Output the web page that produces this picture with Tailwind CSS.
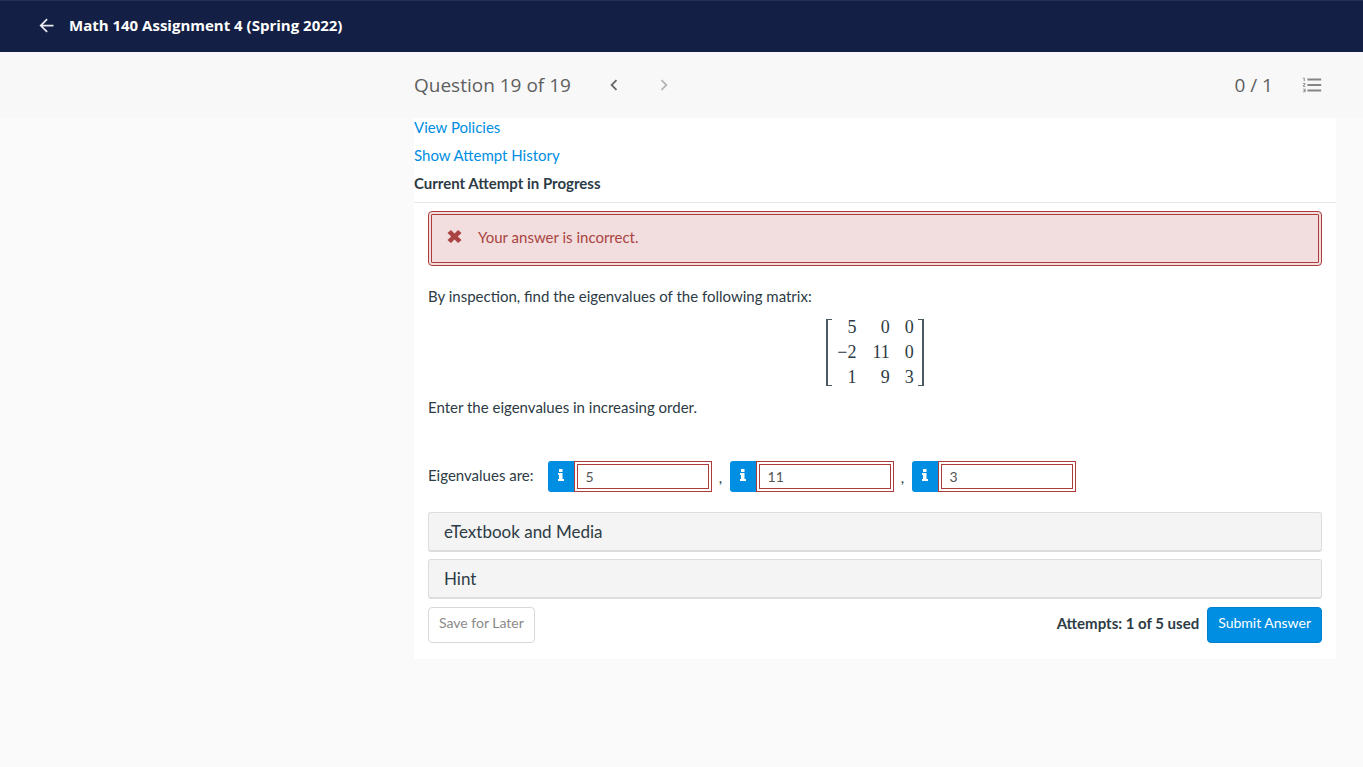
<!DOCTYPE html>
<html lang="en">
<head>
  <meta charset="UTF-8" />
  <meta name="viewport" content="width=device-width, initial-scale=1.0" />
  <title>Math 140 Assignment 4 (Spring 2022)</title>
  <script src="https://cdn.jsdelivr.net/npm/@tailwindcss/browser@4"></script>
</head>
<body class="min-h-screen bg-[#fafafa] font-['Lato',sans-serif] text-[15px] leading-5 text-[#2d3b45]">

  <!-- Top bar -->
  <header class="flex h-[52px] items-center gap-3 border-t border-[#233056] bg-[#131f44] pb-[3px] pl-9 font-['Open_Sans',sans-serif] text-white">
    <a href="#" aria-label="Back">
      <svg class="size-[21px]" viewBox="0 0 24 24" fill="#e8eaf0"><path d="M20 11H7.83l5.59-5.59L12 4l-8 8 8 8 1.41-1.41L7.83 13H20v-2z" /></svg>
    </a>
    <h1 class="text-[15px] font-bold">Math 140 Assignment 4 (Spring 2022)</h1>
  </header>

  <!-- Question navigation -->
  <nav class="flex h-[66px] items-center bg-[#f8f8f8] pr-10 pl-[414px] font-['Open_Sans',sans-serif] text-[19px] text-[#5f5f5f]">
    <h2>Question 19 of 19</h2>
    <button type="button" aria-label="Previous question" class="ml-8">
      <svg class="size-[22px]" viewBox="0 0 24 24" fill="#666"><path d="M15.41 7.41L14 6l-6 6 6 6 1.41-1.41L10.83 12z" /></svg>
    </button>
    <button type="button" aria-label="Next question" disabled class="ml-7">
      <svg class="size-[22px]" viewBox="0 0 24 24" fill="#b5b5b5"><path d="M10 6L8.59 7.41 13.17 12l-4.58 4.59L10 18l6-6z" /></svg>
    </button>
    <span class="ml-auto">0 / 1</span>
    <button type="button" aria-label="Question list" class="ml-7">
      <svg class="size-[22px]" viewBox="0 0 24 24" fill="#858585"><path d="M2 17h2v.5H3v1h1v.5H2v1h3v-4H2v1zm1-9h1V4H2v1h1v3zm-1 3h1.800L2 13.100v.9h3v-1H3.200L5 10.900V10H2v1zm5-6v2h15V5H7zm0 14h15v-2H7v2zm0-6h15v-2H7v2z" /></svg>
    </button>
  </nav>

  <!-- Question card -->
  <main class="mr-[27px] ml-[414px] bg-white pb-4">
    <div class="flex flex-col items-start gap-2 border-b border-[#e8e8e8] pb-[9px]">
      <a href="#" class="-mt-px text-[#008ee2]">View Policies</a>
      <a href="#" class="text-[#008ee2]">Show Attempt History</a>
      <h3 class="font-bold">Current Attempt in Progress</h3>
    </div>

    <div class="px-[14px] pt-2">
      <div role="alert" class="flex h-[55px] items-center gap-4 rounded-[4px] border-4 border-double border-[#ac3c3c] bg-[#f2dede] px-[15px] pb-1 text-[#a94442]">
        <svg class="size-[15px]" viewBox="0 0 16 16" fill="#a94442"><path d="M4.200 1L8 4.800 11.800 1 15.500 4.300 11.500 8l4 3.700L11.800 15 8 11.200 4.200 15 .5 11.700 4.500 8 .5 4.300z" /></svg>
        <p>Your answer is incorrect.</p>
      </div>

      <p class="mt-5">By inspection, find the eigenvalues of the following matrix:</p>

      <!-- Matrix -->
      <div class="mt-[13px] flex justify-center">
        <span class="w-[6px] border-y border-l-2 border-[#4a5860]"></span>
        <table class="-my-1 mr-1 ml-[5px] text-right font-['Liberation_Serif',serif] text-lg leading-[25px]">
          <tbody>
            <tr><td>5</td><td class="pl-4">0</td><td class="pl-[15px]">0</td></tr>
            <tr><td>−2</td><td class="pl-4">11</td><td class="pl-[15px]">0</td></tr>
            <tr><td>1</td><td class="pl-4">9</td><td class="pl-[15px]">3</td></tr>
          </tbody>
        </table>
        <span class="w-[6px] border-y border-r-2 border-[#4a5860]"></span>
      </div>

      <p class="mt-[11px]">Enter the eigenvalues in increasing order.</p>

      <form>
        <div class="mt-11 flex items-center">
          <span class="mr-[14px] pb-1">Eigenvalues are:</span>
          <div class="flex h-[31px]">
            <button type="button" aria-label="Information" class="flex w-[26px] items-center justify-center rounded-l-[3px] bg-[#008ee2] pb-1">
              <svg class="h-3 w-2" viewBox="0 0 8 12" fill="#fff"><path d="M2 0h3.500v3H2zM1 4h4.500v6H7v2H1v-2h1V6H1z" /></svg>
            </button>
            <input type="text" value="5" aria-label="First eigenvalue" class="w-[138px] border-4 border-double border-[#ac3c3c] bg-white px-2 text-sm text-[#555]" />
          </div>
          <span class="w-[18px] text-center">,</span>
          <div class="flex h-[31px]">
            <button type="button" aria-label="Information" class="flex w-[26px] items-center justify-center rounded-l-[3px] bg-[#008ee2] pb-1">
              <svg class="h-3 w-2" viewBox="0 0 8 12" fill="#fff"><path d="M2 0h3.500v3H2zM1 4h4.500v6H7v2H1v-2h1V6H1z" /></svg>
            </button>
            <input type="text" value="11" aria-label="Second eigenvalue" class="w-[138px] border-4 border-double border-[#ac3c3c] bg-white px-2 text-sm text-[#555]" />
          </div>
          <span class="w-[18px] text-center">,</span>
          <div class="flex h-[31px]">
            <button type="button" aria-label="Information" class="flex w-[26px] items-center justify-center rounded-l-[3px] bg-[#008ee2] pb-1">
              <svg class="h-3 w-2" viewBox="0 0 8 12" fill="#fff"><path d="M2 0h3.500v3H2zM1 4h4.500v6H7v2H1v-2h1V6H1z" /></svg>
            </button>
            <input type="text" value="3" aria-label="Third eigenvalue" class="w-[138px] border-4 border-double border-[#ac3c3c] bg-white px-2 text-sm text-[#555]" />
          </div>
        </div>

        <div class="mt-5 flex flex-col gap-[7px]">
          <button type="button" class="h-10 rounded-[3px] border border-b-2 border-[#ddd] bg-[#f4f4f4] px-[15px] text-left text-[17px]">eTextbook and Media</button>
          <button type="button" class="h-10 rounded-[3px] border border-b-2 border-[#ddd] bg-[#f4f4f4] px-[15px] text-left text-[17px]">Hint</button>
        </div>

        <div class="mt-2 flex">
          <button type="button" class="h-9 rounded-[4px] border border-[#d8d8d8] bg-white px-[10px] pb-1 text-sm text-[#8a8a8a]">Save for Later</button>
          <span class="mt-[6px] mr-2 ml-auto font-bold">Attempts: 1 of 5 used</span>
          <button type="submit" class="h-9 rounded-[4px] border border-[#007fca] bg-[#008ee2] px-[10px] pb-1 text-sm text-white">Submit Answer</button>
        </div>
      </form>
    </div>
  </main>
</body>
</html>
